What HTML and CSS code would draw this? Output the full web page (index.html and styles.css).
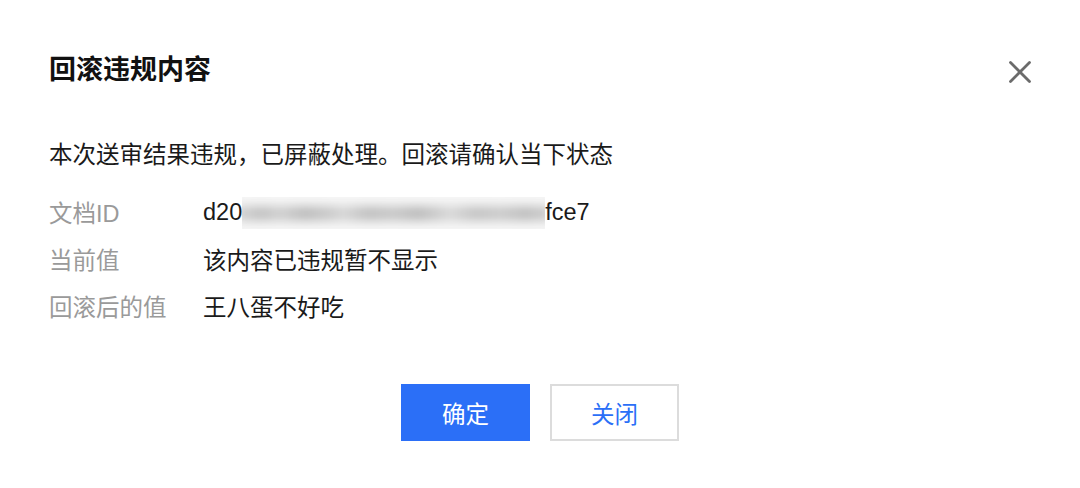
FILE: index.html
```html
<!DOCTYPE html>
<html lang="zh">
<head>
<meta charset="utf-8">
<link rel="stylesheet" href="styles.css">
</head>
<body>
<div class="dialog">
  <div class="header">
    <h1 class="title">回滚违规内容</h1>
    <button class="close" aria-label="关闭">
      <svg width="22" height="22" viewBox="0 0 22 22"><path d="M1.5 1.5 L20.5 20.5 M20.5 1.5 L1.5 20.5" stroke="#6b6b6b" stroke-width="2.8" stroke-linecap="round" fill="none"/></svg>
    </button>
  </div>
  <p class="message">本次送审结果违规，已屏蔽处理。回滚请确认当下状态</p>
  <div class="rows">
    <div class="row"><span class="label">文档ID</span><span class="value">d20<span class="mask"><span class="mask-inner"></span></span>fce7</span></div>
    <div class="row"><span class="label">当前值</span><span class="value">该内容已违规暂不显示</span></div>
    <div class="row"><span class="label">回滚后的值</span><span class="value">王八蛋不好吃</span></div>
  </div>
  <div class="footer">
    <button class="btn btn-primary">确定</button>
    <button class="btn btn-default">关闭</button>
  </div>
</div>
</body>
</html>
```
FILE: styles.css
```css
html, body {
  margin: 0;
  padding: 0;
  background: #ffffff;
}
body {
  font-family: "Liberation Sans", "Noto Sans CJK SC", sans-serif;
  color: rgba(0, 0, 0, 0.9);
}
.dialog {
  padding: 52px 49px 0 49px;
}
.header {
  display: flex;
  justify-content: space-between;
  align-items: center;
  height: 36px;
}
.title {
  margin: 0;
  font-size: 27px;
  font-weight: 700;
  line-height: 36px;
  color: #111;
}
.close {
  border: 0;
  background: none;
  padding: 0;
  width: 22px;
  height: 22px;
  display: flex;
  margin-top: 4px;
}
.message {
  margin: 50px 0 0 0;
  font-size: 23.5px;
  line-height: 34px;
  color: #1a1a1a;
}
.rows {
  margin-top: 16.5px;
}
.row {
  display: flex;
  align-items: center;
  height: 47px;
  font-size: 23.5px;
}
.label {
  width: 154px;
  flex: none;
  color: #9a9a9a;
}
.value {
  color: #1a1a1a;
  display: flex;
  align-items: center;
}
.mask {
  display: block;
  width: 303px;
  height: 32px;
  overflow: hidden;
  background: #f6f6f6;
  margin-top: 2px;
}
.mask-inner {
  display: block;
  margin: 9px -6px 0 -6px;
  height: 15px;
  background: linear-gradient(90deg,
    #d4d4d4 0%, #c2c2c2 8%, #cfcfcf 14%, #bdbdbd 22%, #cacaca 30%,
    #d6d6d6 34%, #c0c0c0 42%, #c8c8c8 50%, #bcbcbc 58%, #cccccc 64%,
    #d8d8d8 68%, #c4c4c4 76%, #cbcbcb 84%, #bfbfbf 92%, #cfcfcf 100%);
  filter: blur(5px);
}
.footer {
  display: flex;
  justify-content: center;
  gap: 20px;
  margin-top: 54.5px;
}
.btn {
  width: 129px;
  height: 57px;
  font-family: "Liberation Sans", "Noto Sans CJK SC", sans-serif;
  font-size: 23.5px;
  padding: 0;
  cursor: pointer;
}
.btn-primary {
  background: #2b6ff7;
  color: #ffffff;
  border: 1px solid #2b6ff7;
}
.btn-default {
  background: #ffffff;
  color: #2b6ff7;
  border: 2px solid #dcdcdc;
}
```
